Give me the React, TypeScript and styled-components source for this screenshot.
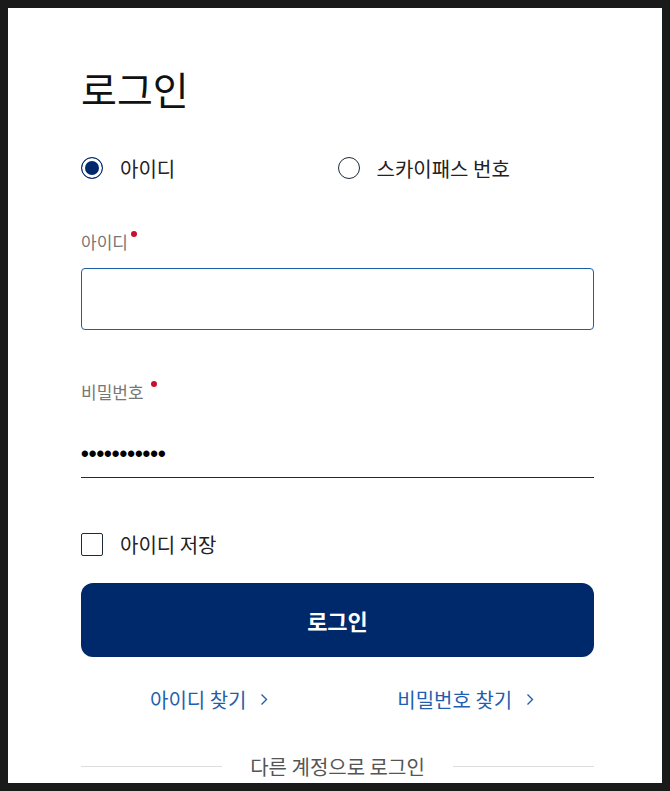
import React, { useState } from 'react'
import styled, { createGlobalStyle } from 'styled-components'

const GlobalStyle = createGlobalStyle`
  html, body {
    margin: 0;
    padding: 0;
    background: #1a1a1a;
  }
  body {
    padding: 8px;
    font-family: 'Noto Sans CJK KR', 'Noto Sans', sans-serif;
    box-sizing: border-box;
  }
  * {
    box-sizing: border-box;
  }
`

const Panel = styled.div`
  background: #ffffff;
  height: 775px;
  overflow: hidden;
  padding: 56px 68px 0 73px;
  display: flex;
  flex-direction: column;
`

const Title = styled.h1`
  margin: 0;
  font-size: 39px;
  line-height: 48px;
  font-weight: 400;
  color: #111111;
`

const RadioRow = styled.div`
  margin-top: 44px;
  display: grid;
  grid-template-columns: 1fr 1fr;
`

const RadioLabel = styled.label`
  display: flex;
  align-items: center;
  gap: 17px;
  height: 24px;
  font-size: 20px;
  color: #222222;
  cursor: pointer;
`

const RadioInput = styled.input`
  appearance: none;
  margin: 0;
  width: 22px;
  height: 22px;
  border-radius: 50%;
  border: 1px solid #1c2a3a;
  background: #ffffff;
  flex-shrink: 0;
  &:checked {
    border: 1.5px solid #00296b;
    box-shadow: inset 0 0 0 3px #ffffff;
    background: #00296b;
  }
`

const FieldLabel = styled.div<{ gap: number }>`
  margin-top: ${({ gap }) => gap}px;
  font-size: 17px;
  line-height: 24px;
  color: #777777;
`

const RequiredDot = styled.span<{ offset: number }>`
  display: inline-block;
  width: 6px;
  height: 6px;
  border-radius: 50%;
  background: #c8102e;
  margin-left: ${({ offset }) => offset}px;
  vertical-align: top;
  margin-top: 1px;
`

const BoxInput = styled.input`
  margin-top: 14px;
  height: 62px;
  width: 100%;
  border: 1px solid #1b5ea8;
  border-radius: 4px;
  padding: 0 16px;
  font-size: 18px;
  font-family: inherit;
  outline: none;
`

const LineInput = styled.input`
  margin-top: 26px;
  height: 48px;
  width: 100%;
  border: none;
  border-bottom: 1px solid #1c2a3a;
  padding: 0;
  font-size: 22px;
  font-weight: 700;
  letter-spacing: 0;
  font-family: 'Liberation Sans', Arial, sans-serif;
  color: #000000;
  outline: none;
`

const CheckRow = styled.label`
  margin-top: 54px;
  display: flex;
  align-items: center;
  gap: 17px;
  height: 24px;
  font-size: 20px;
  color: #222222;
  cursor: pointer;
`

const CheckInput = styled.input`
  appearance: none;
  margin: 0;
  width: 22px;
  height: 23px;
  border: 1px solid #1c2a3a;
  border-radius: 2px;
  background: #ffffff;
  flex-shrink: 0;
`

const LoginButton = styled.button`
  margin-top: 27px;
  height: 74px;
  width: 100%;
  border: none;
  border-radius: 12px;
  background: #00296b;
  color: #ffffff;
  font-family: inherit;
  font-size: 22px;
  font-weight: 700;
  cursor: pointer;
`

const LinkRow = styled.div`
  margin-top: 28px;
  display: grid;
  grid-template-columns: 1fr 1fr;
`

const FindLink = styled.a`
  justify-self: center;
  display: flex;
  align-items: center;
  gap: 14px;
  height: 28px;
  font-size: 20px;
  color: #1f5fae;
  text-decoration: none;
  cursor: pointer;
`

const Divider = styled.div`
  margin-top: 39px;
  display: flex;
  align-items: center;
  gap: 28px;
  height: 28px;
  font-size: 20px;
  color: #555555;
  &::before,
  &::after {
    content: '';
    flex: 1;
    height: 1px;
    background: #dddddd;
  }
`

const Chevron = () => (
  <svg width="8" height="13" viewBox="0 0 8 13" fill="none">
    <path d="M1.5 1.5L6.5 6.5L1.5 11.5" stroke="#1f5fae" strokeWidth="1.4" />
  </svg>
)

const App: React.FC = () => {
  const [mode, setMode] = useState('id')
  const [saveId, setSaveId] = useState(false)

  return (
    <>
      <GlobalStyle />
      <Panel>
        <Title>로그인</Title>
        <RadioRow>
          <RadioLabel>
            <RadioInput type="radio" name="mode" checked={mode === 'id'} onChange={() => setMode('id')} />
            아이디
          </RadioLabel>
          <RadioLabel>
            <RadioInput type="radio" name="mode" checked={mode === 'skypass'} onChange={() => setMode('skypass')} />
            스카이패스 번호
          </RadioLabel>
        </RadioRow>

        <FieldLabel gap={50}>
          아이디
          <RequiredDot offset={3} />
        </FieldLabel>
        <BoxInput type="text" />

        <FieldLabel gap={50}>
          비밀번호
          <RequiredDot offset={7} />
        </FieldLabel>
        <LineInput type="password" defaultValue="12345678901" />

        <CheckRow>
          <CheckInput type="checkbox" checked={saveId} onChange={() => setSaveId(!saveId)} />
          아이디 저장
        </CheckRow>

        <LoginButton>로그인</LoginButton>

        <LinkRow>
          <FindLink>
            아이디 찾기 <Chevron />
          </FindLink>
          <FindLink>
            비밀번호 찾기 <Chevron />
          </FindLink>
        </LinkRow>

        <Divider>다른 계정으로 로그인</Divider>
      </Panel>
    </>
  )
}

export default App
